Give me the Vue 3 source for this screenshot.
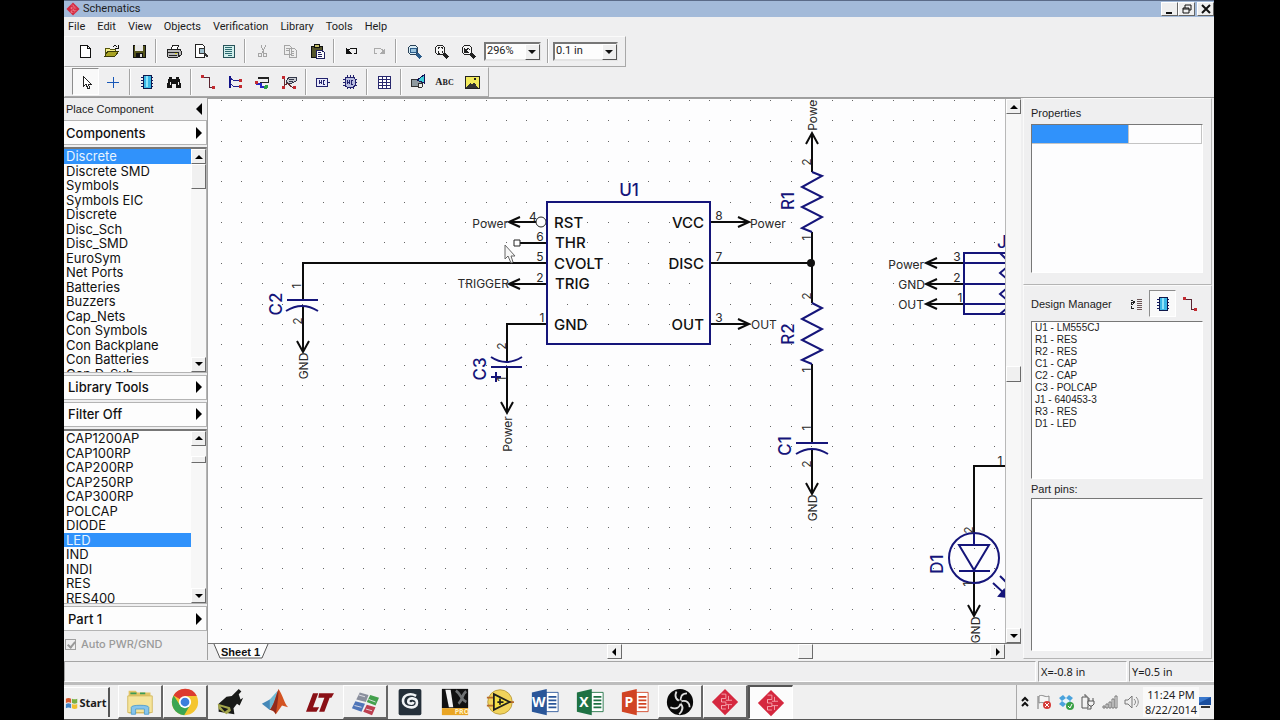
<script setup>
import { ref } from 'vue'

const menus = ['File', 'Edit', 'View', 'Objects', 'Verification', 'Library', 'Tools', 'Help']

const chip = '<path d="M2 3h12M2 6h12M2 9h12M2 12h12" stroke="#111a66" stroke-width="1"/><rect x="4" y="1" width="8" height="13" fill="#39b6e6" stroke="#10184a"/><path d="M8 2v11" stroke="#8fe4fa" stroke-width="2"/>'
const wire = '<path d="M3 3h6v10h5" fill="none" stroke="#5a2430" stroke-width="1"/><path d="M1 1h3v3h-3zM12 12h3v3h-3z" fill="#c22a30"/>'
const lens = '<path d="M10 10l5 5" stroke="#2b5c8a" stroke-width="3"/>'

const fileTools = [
  [
    { name: 'New', art: '<path d="M3 2h7l3 3v9H3z" fill="#fff" stroke="#111"/><path d="M10 2v3h3" fill="none" stroke="#111"/>' },
    { name: 'Open', art: '<path d="M1 13V5h4l1 1h5v2" fill="#f3ee8a" stroke="#55550c"/><path d="M1 13l3-5h11l-4 5z" fill="#a8a323" stroke="#3c3c08"/><path d="M9 4c1-2 3-2 4 0M14 2v3h-3" fill="none" stroke="#111"/>' },
    { name: 'Save', art: '<path d="M2 2h12v12H2z" fill="#55551c" stroke="#111"/><path d="M4 2h8v6H4z" fill="#e8e8e8"/><path d="M5 10h7v4H5z" fill="#111"/><path d="M9 11h2v3H9z" fill="#ddd"/>' }
  ],
  [
    { name: 'Print', art: '<path d="M5 6l2-4h6l-2 4" fill="#fff" stroke="#222"/><path d="M1 7l3-1h10l1 2v4l-3 2H2l-1-2z" fill="#b9b9b9" stroke="#222"/><path d="M2 9h10M3 12h8M12 9v4" stroke="#222"/><path d="M9 10h2" stroke="#d8d020"/>' },
    { name: 'Print preview', art: '<path d="M2 1h7l2 2v11H2z" fill="#fff" stroke="#222"/><circle cx="9" cy="8" r="3" fill="#9fc0cf" stroke="#333"/><path d="M11 10l4 4" stroke="#333" stroke-width="2"/>' },
    { name: 'Titles', art: '<path d="M3 2h11v12H3z" fill="#d2efec" stroke="#28545a"/><path d="M5 4h7M5 6h7M5 8h7M5 10h7M8 12h4" stroke="#2c6a70"/>' }
  ],
  [
    { name: 'Cut', art: '<path d="M6 2l3 8M11 2l-4 8" stroke="#a5a5a5" fill="none"/><circle cx="5" cy="12" r="2" fill="none" stroke="#a5a5a5"/><circle cx="10" cy="12" r="2" fill="none" stroke="#a5a5a5"/>' },
    { name: 'Copy', art: '<path d="M2 2h5l2 2v7H2zM7 5h5l2 2v7H7z" fill="#eee" stroke="#a5a5a5"/><path d="M4 5h3M4 7h3M9 8h3M9 10h3M9 12h3" stroke="#a5a5a5"/>' },
    { name: 'Paste', art: '<path d="M2 3h11v11H2z" fill="#55552c" stroke="#111"/><path d="M5 1h5v3H5z" fill="#c9c36c" stroke="#111"/><path d="M7 7h5l3 2v6H7z" fill="#fff" stroke="#22225e"/><path d="M9 9h3M9 11h4M9 13h4" stroke="#22225e"/>' }
  ],
  [
    { name: 'Undo', art: '<path d="M4 8c2-4 9-4 9 0 0 2-1 3-3 3" fill="none" stroke="#111" stroke-width="1"/><path d="M2 5v6h6z" fill="#111"/>' },
    { name: 'Redo', art: '<path d="M12 8c-2-4-9-4-9 0 0 2 1 3 3 3" fill="none" stroke="#aaa"/><path d="M14 5v6H8z" fill="#aaa"/>' }
  ],
  [
    { name: 'Zoom window', art: lens + '<circle cx="7" cy="7" r="5" fill="#d8ecf5" stroke="#2a4258"/><path d="M4 5h6v4H4z" fill="#9cc4dd" stroke="#2b5c8a"/>' },
    { name: 'Zoom all', art: '<path d="M10 10l5 5" stroke="#222" stroke-width="3"/><circle cx="7" cy="7" r="5" fill="#f6f6f6" stroke="#222"/><path d="M5 6V4h2M9 6V4H8M5 8v2h2M9 8v2" stroke="#222" fill="none"/>' },
    { name: 'Zoom previous', art: '<path d="M10 10l5 5" stroke="#222" stroke-width="3"/><circle cx="7" cy="7" r="5" fill="#f6f6f6" stroke="#222"/><path d="M4 5v5h5z" fill="#222"/><path d="M6 7c2-2 3-1 4 0" stroke="#222" fill="none"/>' }
  ]
]

const objectTools = [
  [
    { name: 'Select', pressed: true, art: '<path d="M5 2v11l3-3 2 5 2-1-2-4h3z" fill="#fff" stroke="#222"/>' },
    { name: 'Origin', art: '<path d="M8 3v11M2 8h12" stroke="#1757b8"/>' }
  ],
  [
    { name: 'Component', art: chip },
    { name: 'Find', art: '<path d="M3 3h3v2h4V3h3l2 8v3h-5v-4H6v4H1v-3z" fill="#151515"/><path d="M4 8v3M12 8v3" stroke="#eee"/>' }
  ],
  [
    { name: 'Wire', art: wire },
    { name: 'Bus', art: '<path d="M3 2v12" stroke="#111188" stroke-width="2"/><path d="M3 4l3 2h7M3 9l3 3h7" fill="none" stroke="#22228e"/><path d="M12 5h3v3h-3zM12 11h3v3h-3z" fill="#c22a30"/>' },
    { name: 'Bus connector', art: '<path d="M4 3h10v5H6v3" fill="none" stroke="#222"/><path d="M4 4h10" stroke="#222"/><path d="M2 10h5v3h4" fill="none" stroke="#2626c8" stroke-width="2"/><path d="M1 7h3v3H1z" fill="#c22a30"/><circle cx="12" cy="13" r="2" fill="#29a043"/>' },
    { name: 'Line to net', art: '<path d="M3 3v9M3 12l5-4M6 9l6 5" fill="none" stroke="#642a30"/><path d="M5 8l3-5h7v4l-6 3z" fill="#c9ccd2" stroke="#33384a"/><path d="M8 5h5M8 7h4" stroke="#33384a"/><path d="M1 2h3v3H1zM1 12h3v3H1zM12 12h3v3h-3z" fill="#c22a30"/>' }
  ],
  [
    { name: 'Net port', art: '<path d="M1 4h11v8H1zM12 8h3" fill="#e9eafc" stroke="#22226e"/><path d="M4 6v4M4 8h2M6 6v4M10 6H8v4h2" stroke="#22226e" fill="none"/>' },
    { name: 'Hierarchy block', art: '<path d="M5 1v14M8 1v14M11 1v14M1 5h14M1 8h14M1 11h14" stroke="#22226e"/><rect x="3" y="3" width="10" height="10" rx="2" fill="#b7bbdf" stroke="#22226e"/><path d="M5 6v4M5 8h2M7 6v4M11 6H9v4h2" stroke="#22226e" fill="none"/>' }
  ],
  [
    { name: 'Table', art: '<path d="M2 2h12v12H2zM2 5h12M2 8h12M2 11h12M6 2v12M10 2v12" fill="#fff" stroke="#28286e"/>' }
  ],
  [
    { name: 'Shape', art: '<path d="M1 5h10v7H1z" fill="#8f9aa0" stroke="#333"/><path d="M14 1v8L7 6z" fill="#3fd0da" stroke="#115"/><path d="M8 9v3c1 3 5 3 5-3z" fill="#eee" stroke="#333"/>' },
    { name: 'Text', label: 'ABC' },
    { name: 'Picture', art: '<path d="M1 2h14v12H1z" fill="#f2ea5c" stroke="#222"/><path d="M2 14l4-5 2 2 2-3 4 6z" fill="#333"/><circle cx="11" cy="5" r="1" fill="#222"/>' }
  ]
]

const libraries = ['Discrete', 'Discrete SMD', 'Symbols', 'Symbols EIC', 'Discrete', 'Disc_Sch', 'Disc_SMD', 'EuroSym', 'Net Ports', 'Batteries', 'Buzzers', 'Cap_Nets', 'Con Symbols', 'Con Backplane', 'Con Batteries', 'Con D-Sub']
const components = ['CAP1200AP', 'CAP100RP', 'CAP200RP', 'CAP250RP', 'CAP300RP', 'POLCAP', 'DIODE', 'LED', 'IND', 'INDI', 'RES', 'RES400']
const designParts = ['U1 - LM555CJ', 'R1 - RES', 'R2 - RES', 'C1 - CAP', 'C2 - CAP', 'C3 - POLCAP', 'J1 - 640453-3', 'R3 - RES', 'D1 - LED']
const library = ref(0)
const component = ref(7)

const gridPitch = 20.35
const dots = []
for (let r = 0; r < 27; r++) {
  for (let c = 0; c < 39; c++) {
    dots.push(`M${Math.round(221 + c * gridPitch)} ${Math.round(100 + r * gridPitch)}h1`)
  }
}
const gridPath = dots.join('')

const pinNames = [
  ['RST', 554, 228], ['THR', 555, 248], ['CVOLT', 554, 269], ['TRIG', 555, 289], ['GND', 554, 330]
]
const pinNamesRight = [['VCC', 704, 228], ['DISC', 704, 269], ['OUT', 704, 330]]
const pinNumbers = [
  ['4', 533, 216], ['6', 540, 236], ['5', 540, 256], ['2', 540, 277], ['1', 542, 317],
  ['8', 719, 215], ['7', 719, 256], ['3', 719, 317],
  ['3', 957, 256], ['2', 957, 277], ['1', 960, 297], ['1', 1000, 460]
]
const pinNumbersTurned = [
  ['1', 296, 286], ['2', 297, 321], ['2', 501, 346], ['1', 501, 379], ['2', 806, 162], ['1', 806, 238],
  ['2', 806, 296], ['1', 806, 370], ['1', 806, 428], ['2', 806, 464], ['2', 968, 530], ['1', 967, 584]
]
const portsLeft = [['Power', 508, 223], ['TRIGGER', 509, 283], ['Power', 924, 264], ['GND', 925, 284], ['OUT', 924, 304]]
const portsRight = [['Power', 750, 223], ['OUT', 751, 324]]
const portsTurned = [['GND', 303, 366], ['Power', 507, 434], ['Power', 812, 113], ['GND', 812, 508], ['GND', 975, 630]]
const designators = [['C2', 276, 304], ['C3', 480, 369], ['R1', 788, 201], ['R2', 788, 334], ['C1', 785, 446], ['D1', 937, 564]]

const diptrace = '<path d="M16 1l15 15-15 15L1 16z" fill="#d5283f"/><path d="M12 7h5v5h-5v4h5v4h-5v4h5M20 9v5M17 14h7M17 19h7M20 19v5M12 12v4M12 20v4" fill="none" stroke="#f6a8b1" stroke-width="1"/>'
const office = (letter, fill) => `<path d="M17 5h14v22H17z" fill="#fff" stroke="${fill}"/><path d="M20 10h9M20 14h9M20 18h9M20 22h9" stroke="${fill}" stroke-width="2"/><path d="M1 5l17-4v30L1 27z" fill="${fill}"/><text x="9" y="22" text-anchor="middle" font-family="Open Sans, sans-serif" font-weight="700" font-size="16" fill="#fff">${letter}</text>`

const apps = [
  { name: 'Explorer', state: 'raised', art: '<path d="M3 3h8l2 2h15v24H3z" fill="#e2c465"/><path d="M5 6h7M16 6h6" stroke="#3c9a55" stroke-width="2"/><path d="M2 9h28v19H2z" fill="#f5e49b" stroke="#d4b75a"/><path d="M6 30v-8c0-3 20-3 20 0v8h-5v-6H11v6z" fill="#86c5ec" stroke="#4e9ccc"/>' },
  { name: 'Chrome', state: 'raised', art: '<circle cx="16" cy="16" r="15" fill="#f4c530"/><path d="M16 16L3 8.5A15 15 0 0 1 29.500 9H16z" fill="#dc3b30"/><path d="M3 8.500A15 15 0 0 0 15 31l7-12-6 3-6-3z" fill="#3aa552"/><circle cx="16" cy="16" r="7" fill="#fff"/><circle cx="16" cy="16" r="5" fill="#3c7fdc"/>' },
  { name: 'Hawk', art: '<path d="M3 18l9-8 6-1 8-8 3 3-3 3 2 6 3-2-4 9-3-2-4 5 1 7-18-3z" fill="#191a18"/><path d="M2 18l14 4 1 4-5 4-9-6z" fill="#a3a54b"/><path d="M5 21l9 3-4 3z" fill="#181818"/>' },
  { name: 'MATLAB', art: '<path d="M1 18l9-5 5 4-5 8z" fill="#4588b8"/><path d="M10 13L19 3l-3 17-6 5z" fill="#71b9d3"/><path d="M20 1c4 5 7 17 11 21l-7-2-7 10c-2-4-4-5-7-5 4-4 7-15 10-24z" fill="#d35322"/><path d="M20 1c0 12-2 21-3 29-2-4-4-5-7-5 4-4 7-15 10-24z" fill="#912b1c"/>' },
  { name: 'LTspice', art: '<path d="M8 6h6L8 22h7l-3 5H0zM15 6h17l-3 5h-2l-6 16h-6l6-16h-7z" fill="#8a1016"/>' },
  { name: 'Tools', state: 'raised', art: '<path d="M10 5l10 3-3 8-11-3z" fill="#8a8f9d"/><path d="M22 8l10 3-4 9-10-4z" fill="#43a04c"/><path d="M5 15l11 3-4 9-11-4z" fill="#5076b8"/><path d="M18 19l10 3-4 9-10-4z" fill="#bd3f50"/><path d="M9 8l7 2M4 20l8 2M20 13l8 3M17 24l7 2" stroke="#e4e4ea" stroke-width="1"/>' },
  { name: 'Spiral', art: '<rect x="3" y="1" width="26" height="30" rx="2" fill="#25303a"/><path d="M23 9c-7-4-15-1-15 6 0 8 16 10 16 2 0-6-10-7-10-2 0 3 5 4 6 1" fill="none" stroke="#f1f4f6" stroke-width="3"/>' },
  { name: 'Editor', art: '<path d="M1 1h30v22H1z" fill="#111"/><path d="M5 2h6l3 20h-5z" fill="#f3f3f3"/><path d="M17 3c7 5 5 10 12 13M20 18c5-4 4-12 9-14" stroke="#6e7173" stroke-width="3" fill="none"/><path d="M1 23h30v8H1z" fill="#e9a524"/><text x="24" y="30" text-anchor="middle" font-family="Open Sans, sans-serif" font-weight="700" font-size="8" fill="#fff3c8">PRO</text>' },
  { name: 'Amplifier', art: '<circle cx="16" cy="16" r="14" fill="#f1d35b" stroke="#b8993b"/><path d="M1 11h8M1 20h8M26 16h6" stroke="#b76b2c" stroke-width="2"/><path d="M9 7l18 9-18 9z" fill="#f5df44" stroke="#20201c" stroke-width="2"/><path d="M16 12v7M13 16h7" stroke="#20201c" stroke-width="2"/>' },
  { name: 'Word', art: office('W', '#2a5699') },
  { name: 'Excel', art: office('X', '#1f7244') },
  { name: 'PowerPoint', art: office('P', '#d14424') },
  { name: 'OBS', state: 'raised', art: '<circle cx="16" cy="16" r="15" fill="#080808"/><path d="M12 4c-3 6 0 11 6 11 6-1 9 2 9 7M5 22c6 3 11 1 12-6-1-6 1-10 7-10M16 17c5 5 3 9-1 13" fill="none" stroke="#dedede" stroke-width="2"/><circle cx="16" cy="16" r="2" fill="#080808"/>' },
  { name: 'DipTrace launcher', state: 'raised', art: diptrace },
  { name: 'DipTrace schematic', state: 'active', art: diptrace }
]

const tray = [
  { name: 'Show hidden icons', art: '<path d="M5 7l3-3 3 3M5 12l3-3 3 3" fill="none" stroke="#111" stroke-width="2"/>' },
  { name: 'Action center', art: '<path d="M2 2v13" stroke="#777"/><path d="M3 2c4-2 6 2 10 0v7c-4 2-6-2-10 0z" fill="#f5f5f5" stroke="#888"/><circle cx="11" cy="11" r="4" fill="#d53b38"/><path d="M9 9l4 4M13 9l-4 4" stroke="#fff"/>' },
  { name: 'Dropbox', art: '<path d="M1 4l4-3 3 3 3-3 4 3-3 3 3 3-4 3-3-3-3 3-4-3 3-3z" fill="#4aa3dc"/><path d="M4 7l4-3 4 3-4 3z" fill="#e8f4fb"/><circle cx="12" cy="12" r="4" fill="#3aa046"/><path d="M10 12l2 2 2-4" fill="none" stroke="#fff"/>' },
  { name: 'Power', art: '<path d="M2 3h6v11H2zM4 1h2v2" fill="#f2f2f2" stroke="#555"/><path d="M9 4v3M13 4v3M8 7h6v3l-2 2h-2l-2-2zM11 12v3H7" fill="#f2f2f2" stroke="#555"/>' },
  { name: 'Network', art: '<path d="M1 12h2v2H1zM4 10h2v4H4zM7 8h2v6H7zM10 5h2v9h-2zM13 2h2v12h-2z" fill="#f6f6f6" stroke="#777"/>' },
  { name: 'Volume', art: '<path d="M1 6h3l4-4v12l-4-4H1z" fill="#eee" stroke="#777"/><path d="M10 5c2 2 2 4 0 6M12 3c3 3 3 7 0 10" fill="none" stroke="#888"/>' }
]
</script>

<template>
  <div class="screen">
    <header class="titlebar">
      <svg class="app-icon" viewBox="0 0 32 32" v-html="diptrace"></svg>
      <h1>Schematics</h1>
      <div class="win-controls">
        <button aria-label="Minimize"><svg viewBox="0 0 12 12"><path d="M2 10h6" stroke="#111" stroke-width="2" /></svg></button>
        <button aria-label="Restore"><svg viewBox="0 0 12 12"><path d="M4 2h6v5H8M4 2v3M2 5h6v5H2z M2 6h6" fill="none" stroke="#111" /></svg></button>
        <button aria-label="Close"><svg viewBox="0 0 12 12"><path d="M2 2l8 8M10 2l-8 8" stroke="#111" stroke-width="2" /></svg></button>
      </div>
    </header>

    <nav class="menubar">
      <button v-for="m in menus" :key="m">{{ m }}</button>
    </nav>

    <div class="toolbars">
      <div class="toolbar first">
        <template v-for="(group, g) in fileTools" :key="g">
          <i v-if="g" class="sep"></i>
          <button v-for="t in group" :key="t.name" :aria-label="t.name"><svg viewBox="0 0 16 16" v-html="t.art"></svg></button>
        </template>
        <span class="combo zoom">
          <select aria-label="Zoom"><option>296%</option></select>
          <b></b>
        </span>
        <i class="sep"></i>
        <span class="combo pitch">
          <select aria-label="Grid size"><option>0.1 in</option></select>
          <b></b>
        </span>
      </div>
      <div class="toolbar second">
        <template v-for="(group, g) in objectTools" :key="g">
          <i v-if="g" class="sep"></i>
          <button v-for="t in group" :key="t.name" :class="{ pressed: t.pressed }" :aria-label="t.name">
            <span v-if="t.label" class="abc">A<small>BC</small></span>
            <svg v-else viewBox="0 0 16 16" v-html="t.art"></svg>
          </button>
        </template>
      </div>
    </div>

    <main class="workspace">
      <aside class="place">
        <button class="place-head">Place Component<i class="tri left"></i></button>
        <button class="drop tight">Components<i class="tri"></i></button>
        <div class="listbox libs">
          <ul role="listbox" aria-label="Libraries">
            <li v-for="(l, i) in libraries" :key="i" role="option" :class="{ on: i === library }" @click="library = i">{{ l }}</li>
          </ul>
          <div class="vbar"><button class="up" aria-label="Scroll up"></button><i class="thumb"></i><button class="down" aria-label="Scroll down"></button></div>
        </div>
        <button class="drop">Library Tools<i class="tri"></i></button>
        <button class="drop">Filter Off<i class="tri"></i></button>
        <div class="listbox parts">
          <ul role="listbox" aria-label="Components">
            <li v-for="(l, i) in components" :key="i" role="option" :class="{ on: i === component }" @click="component = i">{{ l }}</li>
          </ul>
          <div class="vbar"><button class="up" aria-label="Scroll up"></button><i class="thumb short"></i><button class="down" aria-label="Scroll down"></button></div>
        </div>
        <button class="drop">Part 1<i class="tri"></i></button>
        <label class="auto"><input type="checkbox" checked disabled />Auto PWR/GND</label>
      </aside>

      <section class="sheet">
        <div class="canvas-row">
          <svg class="canvas">
            <g transform="translate(-208 -99)">
              <path class="grid" :d="gridPath" />
              <g class="wires">
                <path d="M537 222H510M520 217l-11 5 11 5M547 243H520M547 263H303V300M547 284H510M520 279l-11 5 11 5M547 324H507V361" />
                <path d="M514 240h6v6h-6z" class="thin" />
                <circle cx="541" cy="222" r="5" class="thin" />
                <path d="M710 222h38M738 217l11 5-11 5M710 263h101M710 324h38M738 319l11 5-11 5" />
                <path d="M303 307v45M297 341l6 11 6-11M507 367v45M501 402l6 11 6-11" />
                <path d="M812 134v38M806 144l6-11 6 11M812 232v71M812 364v79M812 450v43M806 483l6 11 6-11" />
                <path d="M964 263h-37M937 258l-11 5 11 5M964 284h-37M937 279l-11 5 11 5M964 304h-37M937 299l-11 5 11 5" />
                <path d="M1006 466h-32v68M974 571v44M968 605l6 11 6-11" />
                <circle cx="811" cy="263" r="4" class="node" />
              </g>
              <g class="symbols">
                <path d="M547 202h163v142H547z" />
                <path d="M287 300h31M286 311Q302 301 318 311M491 367h31M491 357Q506 367 522 357M491 377h10M496 372v10" />
                <path d="M812 172l10 4-20 11 20 10-20 10 20 10-20 11 10 4M812 303l10 5-20 11 20 10-20 11 20 10-20 10 10 4" />
                <path d="M796 443h32M796 454Q812 444 828 454" />
                <path d="M1010 253h-46v61h46M964 263h46M964 284h46M964 304h46M1000 253l6 6M1007 267l-7 6 7 6M1007 288l-7 6 7 6M1000 314l7-6" />
                <circle cx="974" cy="558" r="25" />
                <path d="M974 533v12M959 545h30l-15 25zM959 571h31M1000 576l8 8M993 583l12 11" />
                <path d="M1006 597l-7-1 5-6z" class="solid" />
              </g>
              <text v-for="p in pinNames" :key="p[0]" class="pin-name" :x="p[1]" :y="p[2]">{{ p[0] }}</text>
              <text v-for="p in pinNamesRight" :key="p[0]" class="pin-name end" :x="p[1]" :y="p[2]">{{ p[0] }}</text>
              <text v-for="(p, i) in pinNumbers" :key="'n' + i" class="small mid" :x="p[1]" :y="p[2]">{{ p[0] }}</text>
              <text v-for="(p, i) in pinNumbersTurned" :key="'t' + i" class="small mid" :transform="`translate(${p[1]} ${p[2]}) rotate(-90)`">{{ p[0] }}</text>
              <text v-for="(p, i) in portsLeft" :key="'l' + i" class="small end" :x="p[1]" :y="p[2]">{{ p[0] }}</text>
              <text v-for="(p, i) in portsRight" :key="'r' + i" class="small" :x="p[1]" :y="p[2]">{{ p[0] }}</text>
              <text v-for="(p, i) in portsTurned" :key="'v' + i" class="small mid" :transform="`translate(${p[1]} ${p[2]}) rotate(-90)`">{{ p[0] }}</text>
              <text v-for="p in designators" :key="p[0]" class="ref mid" :transform="`translate(${p[1]} ${p[2]}) rotate(-90)`">{{ p[0] }}</text>
              <text class="ref mid" x="629" y="190">U1</text>
              <text class="ref" x="997" y="242">J</text>
              <path class="cursor" d="M505 245v14l3-3 3 7 2-1-2-6h4z" />
            </g>
          </svg>
          <div class="vbar wide"><button class="up" aria-label="Scroll up"></button><i class="thumb mid-thumb"></i><button class="down" aria-label="Scroll down"></button></div>
        </div>
        <div class="tabs">
          <div class="tab-area">
            <svg class="tab-shape" viewBox="0 0 56 15"><path d="M1 0l6 14h42l6-14" fill="#fdfdfd" stroke="#555" /></svg>
            <button class="tab">Sheet 1</button>
          </div>
          <div class="hbar"><button class="lf" aria-label="Scroll left"></button><i class="hthumb"></i><button class="rt" aria-label="Scroll right"></button></div>
        </div>
      </section>

      <aside class="side">
        <section class="group props">
          <h2>Properties</h2>
          <div class="well grow"><div class="prop-row"><i></i><i></i></div></div>
        </section>
        <section class="group manager">
          <div class="manager-head">
            <h2>Design Manager</h2>
            <button aria-label="Sort"><svg viewBox="0 0 16 16"><path d="M9 3h5M9 5h5M9 7h5M9 9h5M9 11h5M9 13h5" stroke="#6a5454" /><path d="M6 6c-4 0-4 7 0 7M3 4l4 2-3 3" fill="none" stroke="#222" /></svg></button>
            <button class="pressed" aria-label="Components"><svg viewBox="0 0 16 16" v-html="chip"></svg></button>
            <button aria-label="Nets"><svg viewBox="0 0 16 16" v-html="wire"></svg></button>
          </div>
          <ul class="well design"><li v-for="d in designParts" :key="d">{{ d }}</li></ul>
          <h2 class="pins-label">Part pins:</h2>
          <div class="well grow"></div>
        </section>
      </aside>
    </main>

    <footer class="status"><span></span><span class="sx">X=-0.8 in</span><span class="sy">Y=0.5 in</span></footer>

    <div class="taskbar">
      <button class="start">
        <svg viewBox="0 0 16 16"><path d="M1 3c2-1 4-1 6 0v5c-2-1-4-1-6 0z" fill="#d8582c" /><path d="M8 3c2 1 4 1 6 0v5c-2 1-4 1-6 0z" fill="#76b043" /><path d="M1 9c2-1 4-1 6 0v5c-2-1-4-1-6 0z" fill="#3f83c5" /><path d="M8 9c2 1 4 1 6 0v5c-2 1-4 1-6 0z" fill="#f0c02f" /></svg>
        Start
      </button>
      <div class="apps">
        <button v-for="a in apps" :key="a.name" :class="a.state" :aria-label="a.name"><svg viewBox="0 0 32 32" v-html="a.art"></svg></button>
      </div>
      <div class="tray">
        <button v-for="t in tray" :key="t.name" :aria-label="t.name"><svg viewBox="0 0 16 16" v-html="t.art"></svg></button>
        <time><span>11:24 PM</span><span>8/22/2014</span></time>
        <svg class="desk" viewBox="0 0 12 12"><path d="M0 1h12v8H0z" fill="#1b4f9e" /><path d="M0 1h12L0 7z" fill="#3a78cc" /><path d="M2 11h9" stroke="#333" stroke-width="2" /></svg>
      </div>
    </div>
  </div>
</template>

<style>
body { margin: 0; background: #000; }
</style>

<style scoped>
* { box-sizing: border-box; }
.screen { height: 100vh; margin: 0 66px 0 64px; display: flex; flex-direction: column; background: #efeff0; color: #1c1c1c; font: 11px "Noto Sans", "Open Sans", sans-serif; overflow: hidden; }
button { margin: 0; padding: 0; border: 0; background: none; font: inherit; color: inherit; display: flex; align-items: center; justify-content: center; }
h1, h2, ul { margin: 0; padding: 0; font-weight: 400; list-style: none; }
svg { display: block; }

.titlebar { height: 17px; flex: none; display: flex; align-items: center; padding: 0 0 0 2px; border-top: 1px solid #5b6b88; background: #a3bad9; }
.app-icon { width: 14px; height: 14px; }
.titlebar h1 { flex: 1; margin-left: 3px; font: 11px Roboto, sans-serif; line-height: 16px; }
.win-controls { display: flex; }
.win-controls button { width: 17px; height: 14px; background: #efefef; border: 1px solid; border-color: #fff #666 #666 #fff; }
.win-controls button:last-child { margin-left: 2px; }
.win-controls svg { width: 12px; height: 12px; }

.menubar { height: 19px; flex: none; display: flex; gap: 12px; padding: 0 4px; font-family: Roboto, sans-serif; }

.toolbars { height: 62px; flex: none; display: flex; flex-direction: column; align-items: flex-start; border-bottom: 1px solid #9d9d9d; }
.toolbar { height: 31px; display: flex; align-items: center; border: 1px solid; border-color: #fafafa #a8a8a8 #a8a8a8 #fafafa; }
.toolbar.first { padding: 0 7px 0 6px; }
.toolbar.second { padding: 0 3px 0 7px; }
.toolbar button { width: 27px; height: 27px; }
.toolbar button svg { width: 16px; height: 16px; shape-rendering: crispEdges; }
.sep { width: 8px; height: 24px; flex: none; background: linear-gradient(90deg, transparent 3px, #a4a4a4 3px, #a4a4a4 4px, #fff 4px, #fff 5px, transparent 5px); }
.second .sep { width: 7px; height: 26px; }
.pressed { background: #f9f9f9; border: 1px solid; border-color: #8d8d8d #fff #fff #8d8d8d; }
.abc { font: 700 10px "Liberation Serif", serif; }
.abc small { font-size: 8px; }
.combo { position: relative; height: 19px; display: flex; }
.combo.zoom { width: 57px; margin: 0 3px; }
.combo.pitch { width: 65px; margin-left: 1px; }
.combo select { appearance: none; width: 100%; height: 19px; padding: 0 0 1px 1px; border: 2px solid; border-color: #777 #e4e4e4 #e4e4e4 #777; border-radius: 0; background: #fdfdfd; color: #1c1c1c; font: 11px Roboto, sans-serif; }
.combo b { position: absolute; right: 1px; top: 2px; width: 15px; height: 16px; background: #efefef; border: 1px solid; border-color: #fff #555 #555 #fff; pointer-events: none; }
.combo b::after { content: ""; position: absolute; left: 2px; top: 5px; border: 4px solid transparent; border-top-color: #111; border-bottom: 0; }

.workspace { flex: 1; min-height: 0; display: flex; }
.place { width: 144px; flex: none; display: flex; flex-direction: column; padding: 1px 0 3px 0; border-right: 1px solid #a0a0a0; font-family: Inter, "Liberation Sans", sans-serif; font-size: 13px; font-weight: 500; color: #111; }
.place-head { height: 21px; flex: none; justify-content: space-between; padding: 0 5px 2px 2px; font: 11px "Liberation Sans", sans-serif; color: #222; }
.tri { width: 0; height: 0; border: 6px solid transparent; border-left-color: #000; border-right: 0; }
.tri.left { border: 6px solid transparent; border-right-color: #000; border-left: 0; }
.drop { height: 25px; flex: none; justify-content: space-between; margin-top: 2px; padding: 0 4px 0 4px; background: #fdfdfd; border: 1px solid #b4b4b4; border-left: 0; font-size: 13px; }
.drop.tight { margin-top: 0; padding-left: 2px; }
.listbox { display: flex; margin-top: 2px; background: #fdfdfd; border: 1px solid #b4b4b4; border-top: 2px solid #777; border-left: 0; overflow: hidden; }
.libs { flex: 227 1 0; min-height: 0; }
.parts { flex: 176 1 0; min-height: 0; }
.listbox ul { flex: 1; min-width: 0; overflow: hidden; }
.listbox li { height: 14px; padding-left: 2px; line-height: 14px; font-size: 13px; white-space: nowrap; }
.listbox li:nth-child(odd) { height: 15px; }
.listbox li.on { background: #3092fb; color: #e8f4ff; }
.vbar { width: 15px; flex: none; display: flex; flex-direction: column; background: #f7f7f7; }
.vbar button, .hbar button, .thumb, .hthumb { flex: none; background: #f0f0f0; border: 1px solid; border-color: #fff #6b6b6b #6b6b6b #fff; }
.vbar button { height: 15px; }
.vbar button::after { content: ""; border: 4px solid transparent; }
.vbar .up::after { border-bottom-color: #000; border-top: 0; }
.vbar .down::after { border-top-color: #000; border-bottom: 0; }
.vbar .down { margin-top: auto; }
.thumb { height: 25px; }
.thumb.short { height: 7px; margin-top: 10px; }
.vbar.wide { width: 16px; border-left: 1px solid #b8b8b8; }
.wide .up { margin-bottom: auto; }
.wide .mid-thumb { height: 16px; margin-top: 5px; }
.auto { height: 26px; display: flex; align-items: center; gap: 5px; padding-left: 1px; font-size: 11px; color: #9a9a9a; }
.auto input { appearance: none; width: 11px; height: 11px; margin: 0; border: 1px solid #a0a0a0; position: relative; }
.auto input::after { content: ""; position: absolute; left: 3px; top: 0; width: 3px; height: 6px; border: solid #999; border-width: 0 2px 2px 0; transform: rotate(40deg); }

.sheet { flex: 1; min-width: 0; display: flex; flex-direction: column; }
.canvas-row { flex: 1; min-height: 0; display: flex; border-top: 1px solid #a0a0a0; }
.canvas { flex: 1; min-width: 0; height: 100%; background: #fdfdfe; overflow: hidden; }
.grid { stroke: #666; stroke-width: 1; shape-rendering: crispEdges; }
.wires path { fill: none; stroke: #0c0c0c; stroke-width: 2; }
.wires .thin { fill: #fdfdfe; stroke: #222; stroke-width: 1; }
.node { fill: #111; }
.symbols path, .symbols circle { fill: none; stroke: #15157a; stroke-width: 2; }
.symbols .solid { fill: #15157a; }
.pin-name { font: 500 15px Inter, sans-serif; fill: #111; }
.small { font: 12px Inter, sans-serif; fill: #2a2a2a; dominant-baseline: central; }
.ref { font: 500 17px Inter, sans-serif; fill: #15157a; dominant-baseline: central; }
.mid { text-anchor: middle; }
.end { text-anchor: end; }
.cursor { fill: #f6f6f6; stroke: #666; }
.tabs { height: 17px; flex: none; display: flex; justify-content: space-between; border-top: 1px solid #777; padding-right: 16px; }
.tab-area { position: relative; width: 72px; }
.tab-shape { position: absolute; left: 5px; top: 0; width: 56px; height: 15px; }
.tab { position: relative; margin-left: 13px; height: 15px; font: 700 11px "Liberation Sans", sans-serif; color: #111; }
.hbar { width: 50%; height: 16px; display: flex; justify-content: space-between; background: #f7f7f7; }
.hbar button, .hthumb { width: 15px; height: 15px; }
.hbar button::after { content: ""; border: 4px solid transparent; }
.hbar .lf::after { border-right-color: #000; border-left: 0; }
.hbar .rt::after { border-left-color: #000; border-right: 0; }

.side { width: 193px; flex: none; display: flex; flex-direction: column; padding: 0 2px 1px 2px; color: #1c1c1c; }
.side h2 { font: 11px "Liberation Sans", sans-serif; }
.group { display: flex; flex-direction: column; border: 1px solid; border-color: #fafafa #b4b4b4 #b4b4b4 #fafafa; padding: 0 8px 0 7px; }
.props { flex: 174 1 0; padding-bottom: 11px; }
.props h2 { padding: 7px 0 4px; line-height: 14px; }
.manager { flex: 364 1 0; padding-bottom: 7px; }
.well { background: #fdfdfe; border: 1px solid; border-color: #777 #fff #fff #777; }
.grow { flex: 1; }
.prop-row { height: 19px; display: flex; border-bottom: 1px solid #c4c4c4; border-right: 1px solid #c4c4c4; }
.prop-row i { flex: 43; border-left: 1px solid #c4c4c4; }
.prop-row i:first-child { flex: 57; background: #3092fb; border: 0; }
.manager-head { height: 35px; display: flex; align-items: center; }
.manager-head h2 { flex: 1; white-space: nowrap; }
.manager-head button { width: 27px; height: 27px; flex: none; }
.manager-head svg { width: 16px; height: 16px; shape-rendering: crispEdges; }
.design { flex: none; height: 158px; padding-left: 3px; }
.design li { font: 10px "Liberation Sans", sans-serif; line-height: 12px; }
.side .pins-label { height: 19px; line-height: 20px; }

.status { height: 21px; flex: none; display: grid; grid-template-columns: 1fr 89px 85px; gap: 2px; margin-top: 1px; }
.status span { border: 1px solid; border-color: #a5a5a5 #fff #fff #a5a5a5; padding-left: 2px; line-height: 19px; white-space: nowrap; }

.taskbar { height: 38px; flex: none; display: flex; align-items: stretch; border-top: 3px solid #bdbdbd; border-bottom: 1px solid #555; background: #f0f0f0; }
.start { width: 46px; margin: 2px 0; gap: 0; font: 700 11px "Noto Sans", "Open Sans", sans-serif; border-right: 2px solid #555; border-top: 1px solid #fff; }
.start svg { width: 14px; height: 14px; }
.apps { flex: 1; display: flex; margin-left: 8px; }
.apps button { width: 45px; flex: none; border: 1px solid transparent; border-width: 1px 2px 2px 1px; }
.apps svg { width: 28px; height: 28px; }
.apps .raised { border-color: #fff #666 #666 #fff; }
.apps .active { border-color: #555 #fff #fff #555; border-width: 2px 1px 1px 2px; background: #fcfcfc; }
.tray { display: flex; align-items: center; border-left: 1px solid #aaa; }
.tray button { width: 22px; height: 30px; }
.tray button:first-child { width: 16px; }
.tray svg { width: 16px; height: 16px; }
.tray time { display: flex; flex-direction: column; align-items: center; width: 56px; font-size: 11px; line-height: 15px; background: #fafafa; color: #222; }
.tray .desk { width: 12px; height: 12px; margin: 0 3px 0 0; }
</style>
